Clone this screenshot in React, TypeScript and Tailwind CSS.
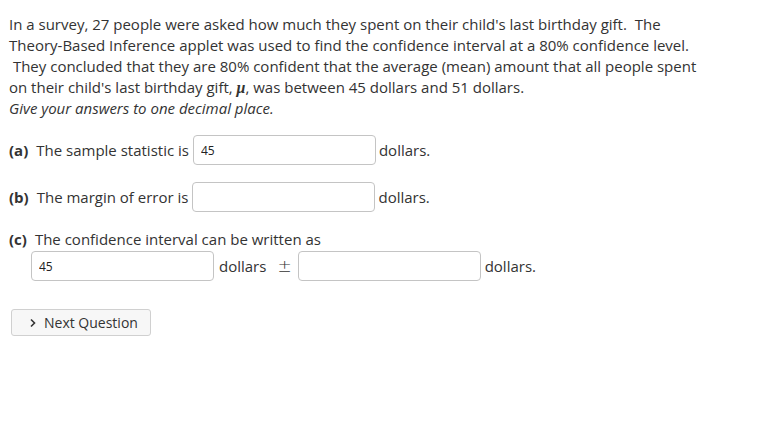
import React from 'react'

function AnswerBox({ value, className = '' }: { value?: string; className?: string }) {
    return (
        <input
            type="text"
            defaultValue={value}
            className={`h-[30px] w-[183px] rounded-[4px] border border-[#c4c4c4] bg-white px-[7px] text-[12px] text-[#222] outline-none ${className}`}
        />
    )
}

export default function App() {
    return (
        <div className="min-h-[441px] bg-white pl-[9px] pt-[14px] text-[15px] leading-[21px] text-[#333] [font-family:'Open_Sans',sans-serif]">
            {/* question stem */}
            <p>
                In a survey, 27 people were asked how much they spent on their child's last birthday gift.&nbsp; The
                <br />
                Theory-Based Inference applet was used to find the confidence interval at a 80% confidence level.
                <br />
                &nbsp;They concluded that they are 80% confident that the average (mean) amount that all people spent
                <br />
                on their child's last birthday gift,{' '}
                <span className="font-bold italic [font-family:'Liberation_Serif',serif] text-[16px]">μ</span>, was between 45 dollars and 51 dollars.
                <br />
                <i>Give your answers to one decimal place.</i>
            </p>

            {/* part a */}
            <div className="mt-[16px] flex items-center">
                <b>(a)</b>
                <span className="ml-[8px]">The sample statistic is</span>
                <AnswerBox value="45" className="ml-[4px]" />
                <span className="ml-[3px]">dollars.</span>
            </div>

            {/* part b */}
            <div className="mt-[17px] flex items-center">
                <b>(b)</b>
                <span className="ml-[8px]">The margin of error is</span>
                <AnswerBox className="ml-[4px]" />
                <span className="ml-[3px]">dollars.</span>
            </div>

            {/* part c */}
            <div className="mt-[17px]">
                <div>
                    <b>(c)</b>
                    <span className="ml-[8px]">The confidence interval can be written as</span>
                </div>
                <div className="mt-[1px] flex items-center pl-[22px]">
                    <AnswerBox value="45" />
                    <span className="ml-[5px]">dollars</span>
                    <span className="ml-[11px] text-[17px] font-light [font-family:'DejaVu_Sans',sans-serif]">±</span>
                    <AnswerBox className="ml-[6px]" />
                    <span className="ml-[4px]">dollars.</span>
                </div>
            </div>

            <button className="mt-[28px] ml-[2px] flex h-[27px] w-[140px] items-center rounded-[3px] border border-[#d0d0d0] bg-[#f7f7f7] pl-[17px] text-[14px] text-[#333]">
                <svg width="8" height="10" viewBox="0 0 8 10" className="mr-[7px]">
                    <path d="M2 1.5 L5.5 5 L2 8.5" fill="none" stroke="#333" strokeWidth="1.6" />
                </svg>
                Next Question
            </button>
        </div>
    )
}
